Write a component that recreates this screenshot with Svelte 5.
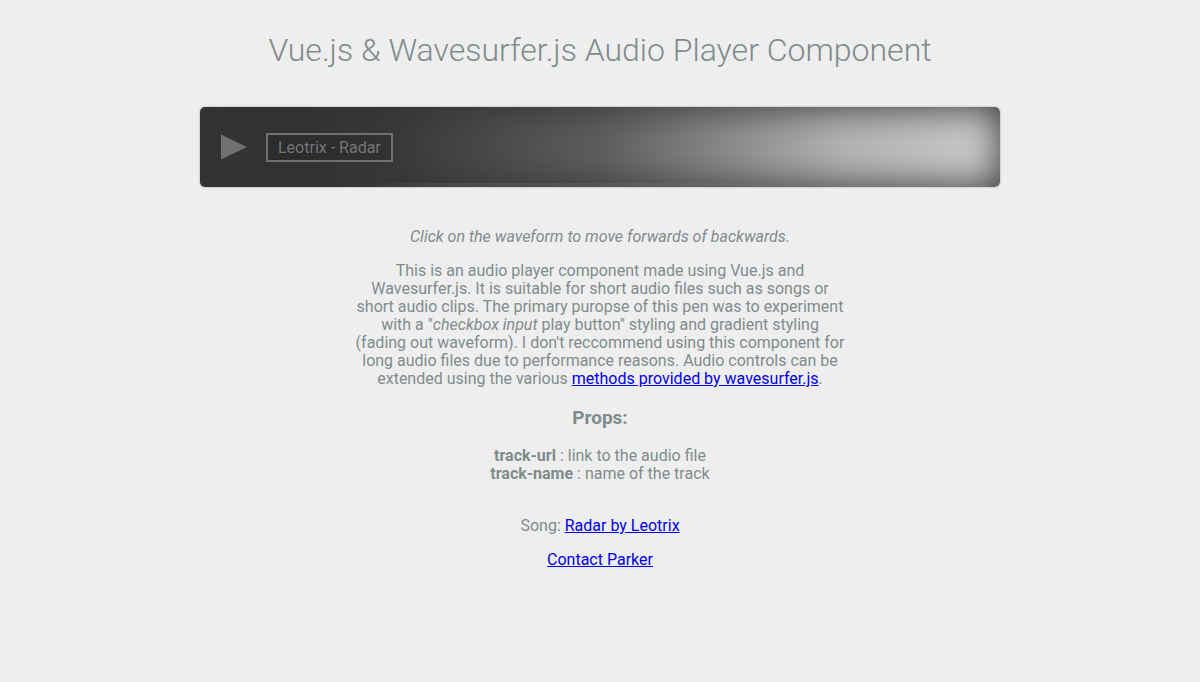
<script>
  export let trackName = 'Leotrix - Radar';

  let playing = false;
</script>

<main>
  <h1>Vue.js &amp; Wavesurfer.js Audio Player Component</h1>

  <div class="player">
    <label class="play">
      <input type="checkbox" bind:checked={playing} aria-label="Play or pause" />
      <svg viewBox="0 0 26 26" aria-hidden="true">
        {#if playing}
          <path d="M3 1h7v24H3zM16 1h7v24h-7z" />
        {:else}
          <path d="M0 0.5L26 13L0 25.5z" />
        {/if}
      </svg>
    </label>
    <div class="track">{trackName}</div>
  </div>

  <div class="info">
    <p><em>Click on the waveform to move forwards of backwards.</em></p>
    <p>
      This is an audio player component made using Vue.js and Wavesurfer.js. It is suitable for
      short audio files such as songs or short audio clips. The primary puropse of this pen was to
      experiment with a "<em>checkbox input</em> play button" styling and gradient styling (fading
      out waveform). I don't reccommend using this component for long audio files due to
      performance reasons. Audio controls can be extended using the various
      <a href="#methods">methods provided by wavesurfer.js</a>.
    </p>
    <h3>Props:</h3>
    <p>
      <strong>track-url</strong> : link to the audio file<br />
      <strong>track-name</strong> : name of the track
    </p>
    <p class="song">Song: <a href="#song">Radar by Leotrix</a></p>
    <p><a href="#contact">Contact Parker</a></p>
  </div>
</main>

<style>
  :global(body) {
    margin: 0;
    background: #eee;
  }

  main {
    padding: 31px 20px;
    font-family: Roboto, sans-serif;
    font-size: 16px;
    line-height: 18px;
    color: #7f8c8d;
    text-align: center;
  }

  h1 {
    margin: 0 0 38px;
    font-size: 32px;
    font-weight: 300;
    line-height: 38px;
  }

  .player {
    display: flex;
    align-items: center;
    box-sizing: border-box;
    max-width: 800px;
    height: 80px;
    margin: 0 auto 41px;
    padding: 0 21px;
    border-radius: 5px;
    background:
      linear-gradient(to right, transparent 18%, rgba(255, 255, 255, 0.12) 30% 60%, transparent 82%) bottom / 100% 4px no-repeat,
      linear-gradient(to right, #333 14%, #3a3a3a 25%, #5e5e5e 50%, #b2b2b2 80%, #ccc);
    box-shadow: 0 0 2px rgba(0, 0, 0, 0.4), inset 0 0 36px #333;
  }

  .play {
    display: flex;
    position: relative;
    margin-right: 19px;
    cursor: pointer;
  }

  .play input {
    position: absolute;
    inset: 0;
    margin: 0;
    opacity: 0;
    cursor: pointer;
  }

  .play svg {
    width: 26px;
    height: 26px;
    fill: #707070;
  }

  .track {
    padding: 4px 10px;
    border: 2px solid #707070;
    background: rgba(0, 0, 0, 0.1);
    line-height: 17px;
    color: #757575;
  }

  .info {
    max-width: 490px;
    margin: 0 auto;
  }

  p {
    margin: 0 0 16px;
  }

  h3 {
    margin: 19px 0 18px;
    font-size: 19px;
    line-height: 22px;
  }

  .song {
    margin-top: 34px;
  }

  a {
    color: #0000ee;
  }
</style>
